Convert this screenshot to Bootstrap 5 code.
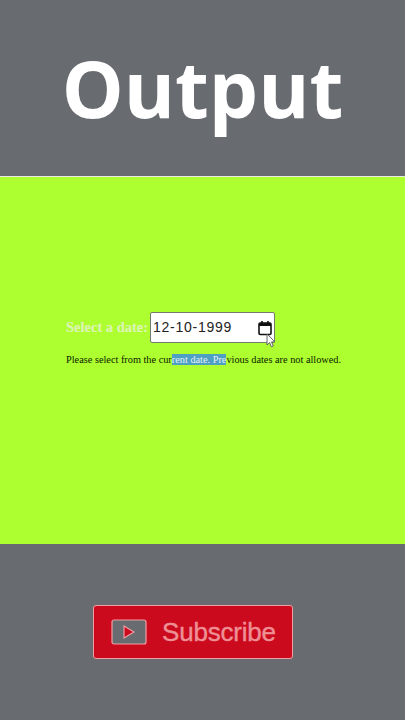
<!DOCTYPE html>
<html lang="en">
<head>
<meta charset="utf-8">
<title>Output</title>
<link rel="stylesheet" href="https://cdn.jsdelivr.net/npm/bootstrap@5.3.0/dist/css/bootstrap.min.css">
<style>
html,body{margin:0;height:720px;overflow:hidden;background:#686b70}
.stage{width:405px;height:720px}
.head-band{height:176px;background:#686b70;border-bottom:1px solid #e8ece0;box-sizing:content-box}
.head-title{font-family:"Open Sans",sans-serif;font-weight:700;font-size:78px;line-height:1;color:#fff;padding-top:49px}
.lime-band{height:367px;background:#adff2f;padding-left:66px;padding-top:135px}
.date-label{font-family:"Liberation Serif",serif;font-weight:700;font-size:14.5px;color:#dcf5b4;white-space:nowrap;width:84px;-webkit-text-stroke:.2px #dcf5b4}
.date-box{width:125px;height:31px;background:#fff;border:1px solid #76796f;border-radius:2px;padding-left:2px;padding-right:1px;position:relative}
.date-val{font-family:"Liberation Sans",sans-serif;font-size:14px;letter-spacing:.75px;color:#222}
.cursor-mark{position:absolute;left:115px;top:20px}
.hint{font-family:"Liberation Serif",serif;font-size:10.3px;color:#0b1a00;margin:9px 0 0;white-space:nowrap}
.sel{background:#4d9fc4;color:#e6f3f5}
.foot-band{height:176px;padding-top:61px;padding-left:93px}
.sub-btn{width:200px;height:54px;background:#cc0a1e;border:1px solid #f0a0a4;border-radius:3px;padding-left:17px;gap:15px}
.sub-text{font-family:"Liberation Sans",sans-serif;font-size:26px;line-height:1;color:#ee8f95;letter-spacing:-.2px;-webkit-text-stroke:.4px #ee8f95}
</style>
</head>
<body>
<div class="stage d-flex flex-column">
  <div class="head-band text-center">
    <div class="head-title">Output</div>
  </div>
  <div class="lime-band">
    <div class="d-flex align-items-center">
      <span class="date-label">Select a date:</span>
      <div class="date-box d-flex align-items-center justify-content-between">
        <span class="date-val">12-10-1999</span>
        <svg width="16" height="16" viewBox="0 0 16 16" aria-hidden="true"><rect x="2" y="3" width="12" height="11.5" rx="1.2" fill="none" stroke="#111" stroke-width="1.6"/><rect x="2" y="3" width="12" height="3" fill="#111"/><rect x="4.2" y="1" width="1.6" height="3" fill="#111"/><rect x="10.2" y="1" width="1.6" height="3" fill="#111"/></svg>
        <svg class="cursor-mark" width="10" height="15" viewBox="0 0 10 15" aria-hidden="true"><path d="M1 1v11l2.6-2.4 1.8 4.2 1.9-.8-1.8-4.1H9z" fill="#fff" stroke="#555" stroke-width=".9"/></svg>
      </div>
    </div>
    <p class="hint">Please select from the cur<span class="sel">rent date. Pre</span>vious dates are not allowed.</p>
  </div>
  <div class="foot-band">
    <div class="sub-btn d-flex align-items-center">
      <svg width="36" height="26" viewBox="0 0 36 26" aria-hidden="true"><rect x="1" y="1" width="34" height="24" rx="2" fill="#686b70" stroke="#f0a0a4" stroke-width="1.2"/><path d="M13 7l10 6-10 6z" fill="#cc0a1e" stroke="#f0a0a4" stroke-width="1.1"/></svg>
      <span class="sub-text">Subscribe</span>
    </div>
  </div>
</div>
<script src="https://cdn.jsdelivr.net/npm/bootstrap@5.3.0/dist/js/bootstrap.bundle.min.js"></script>
</body>
</html>
